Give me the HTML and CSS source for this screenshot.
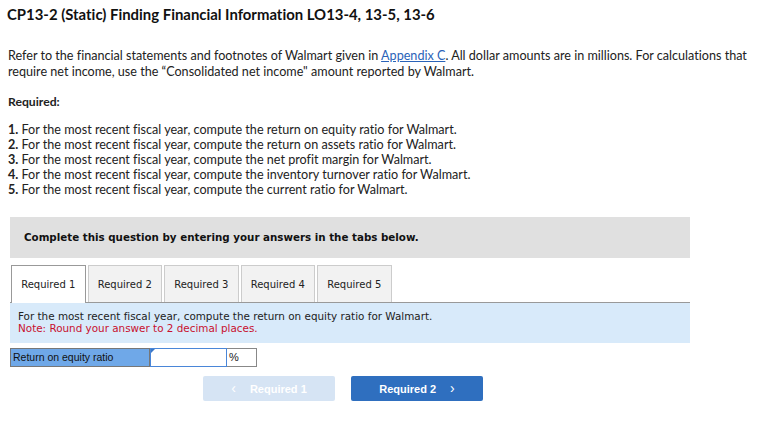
FILE: index.html
```html
<!DOCTYPE html>
<html>
<head>
<meta charset="utf-8">
<link rel="stylesheet" href="styles.css">
</head>
<body>
<h1 class="title">CP13-2 (Static) Finding Financial Information LO13-4, 13-5, 13-6</h1>
<p class="intro">Refer to the financial statements and footnotes of Walmart given in <a class="link" href="#">Appendix C</a>. All dollar amounts are in millions. For calculations that require net income, use the “Consolidated net income" amount reported by Walmart.</p>
<p class="req">Required:</p>
<ol class="list">
<li><b>1.</b> For the most recent fiscal year, compute the return on equity ratio for Walmart.</li>
<li><b>2.</b> For the most recent fiscal year, compute the return on assets ratio for Walmart.</li>
<li><b>3.</b> For the most recent fiscal year, compute the net profit margin for Walmart.</li>
<li><b>4.</b> For the most recent fiscal year, compute the inventory turnover ratio for Walmart.</li>
<li><b>5.</b> For the most recent fiscal year, compute the current ratio for Walmart.</li>
</ol>
<div class="banner">Complete this question by entering your answers in the tabs below.</div>
<div class="tabs">
<div class="tab active">Required 1</div>
<div class="tab">Required 2</div>
<div class="tab">Required 3</div>
<div class="tab">Required 4</div>
<div class="tab">Required 5</div>
</div>
<div class="info">
<div>For the most recent fiscal year, compute the return on equity ratio for Walmart.</div>
<div class="note">Note: Round your answer to 2 decimal places.</div>
</div>
<div class="row">
<div class="label">Return on equity ratio</div>
<div class="input"><span class="tri"></span></div>
<div class="pct">%</div>
</div>
<div class="nav">
<div class="btn prev"><span class="chev">&lsaquo;</span>Required 1</div>
<div class="btn next">Required 2<span class="chev r">&rsaquo;</span></div>
</div>
</body>
</html>
```
FILE: styles.css
```css
body {
  margin: 0;
  padding: 0 8px;
  font-family: "Lato", "Open Sans", sans-serif;
  color: #222;
  background: #fff;
  width: 754px;
  font-variant-ligatures: none;
}
.title {
  margin: 5px 0 0 -1px;
  font-size: 14.9px;
  font-weight: 700;
  line-height: 18px;
  color: #111;
}
.intro {
  margin: 25px 0 0 0;
  font-size: 12.6px;
  line-height: 16px;
}
.link {
  color: #2a63b8;
}
.req {
  margin: 14px 0 0 0;
  font-size: 12.2px;
  font-weight: 700;
  line-height: 16px;
}
.list {
  list-style: none;
  margin: 12px 0 0 0;
  padding: 0;
  font-size: 12.6px;
  line-height: 15px;
}
.list b { font-weight: 700; }
.banner {
  margin: 20px 72px 0 2px;
  height: 41px;
  background: #e0e0e0;
  font-family: "DejaVu Sans", Verdana, sans-serif;
  font-weight: 700;
  font-size: 10.3px;
  line-height: 41px;
  padding-left: 14px;
  color: #111;
}
.tabs {
  display: flex;
  gap: 2px;
  margin: 7px 72px 0 2px;
  border-bottom: 1px solid #999;
  padding-left: 1px;
}
.tab {
  width: 72.5px;
  height: 36px;
  border: 1px solid #ccc;
  border-bottom: none;
  background: #f2f2f2;
  font-family: "DejaVu Sans", Verdana, sans-serif;
  font-size: 10px;
  line-height: 37px;
  text-align: center;
  color: #222;
}
.tab.active {
  background: #fff;
  border-color: #999;
  margin-bottom: -1px;
  height: 37px;
}
.info {
  margin: 0 72px 0 2px;
  background: #d8eafa;
  height: 40px;
  padding: 7px 0 0 8px;
  box-sizing: border-box;
  font-family: "DejaVu Sans", Verdana, sans-serif;
  font-size: 10.4px;
  line-height: 12px;
  color: #222;
}
.note { color: #c8102e; }
.row {
  display: flex;
  margin: 5px 0 0 2px;
  height: 19px;
}
.label {
  width: 136px;
  background: #6fa8e8;
  border: 1px solid #777;
  font-family: "Liberation Sans", Arial, sans-serif;
  font-size: 10.5px;
  line-height: 17px;
  padding-left: 2px;
  color: #111;
}
.input {
  position: relative;
  width: 75px;
  border: 1px solid #4a86d8;
  background: #fff;
}
.tri {
  position: absolute;
  left: 0;
  top: 0;
  width: 0;
  height: 0;
  border-top: 4px solid #3a78c8;
  border-right: 4px solid transparent;
}
.pct {
  width: 30px;
  border: 1px solid #888;
  border-left: none;
  background: #fff;
  font-family: "Liberation Sans", Arial, sans-serif;
  font-size: 11px;
  line-height: 17px;
  padding-left: 2px;
  box-sizing: border-box;
}
.nav {
  display: flex;
  gap: 16px;
  margin: 9px 0 0 195px;
}
.btn {
  width: 132px;
  height: 25px;
  border-radius: 2px;
  font-family: "Liberation Sans", Arial, sans-serif;
  font-weight: 700;
  font-size: 11px;
  line-height: 25px;
  text-align: center;
  color: #fff;
}
.prev { background: #d6e4f4; }
.next { background: #2f6fbf; }
.chev {
  font-size: 14px;
  font-weight: 400;
  margin-right: 14px;
}
.chev.r {
  margin-right: 0;
  margin-left: 14px;
}
```
